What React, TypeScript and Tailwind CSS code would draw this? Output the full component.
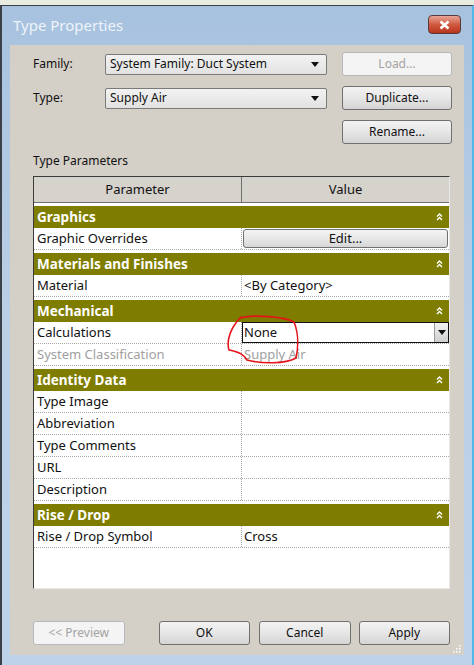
import React from 'react';

const font = { fontFamily: '"Noto Sans", "Open Sans", sans-serif' };

function Btn({ label, disabled, className = '' }: { label: string; disabled?: boolean; className?: string }) {
  return (
    <div
      className={
        'flex items-center justify-center rounded-[3px] border text-[12px] ' +
        (disabled
          ? 'border-[#b5b9bc] bg-[#f4f4f4] text-[#a3a3a3] '
          : 'border-[#707070] bg-gradient-to-b from-[#f3f3f3] via-[#e6e6e6] to-[#d4d4d4] text-[#111] ') +
        className
      }
    >
      {label}
    </div>
  );
}

function Combo({ value }: { value: string }) {
  return (
    <div className="flex h-[21px] w-[222px] items-center justify-between rounded-[2px] border border-[#7a7a7a] bg-gradient-to-b from-[#f2f2f2] to-[#e2e2e2] pl-[4px] pr-[7px] text-[12px] text-[#111]">
      <span>{value}</span>
      <svg width="8" height="5" viewBox="0 0 8 5">
        <path d="M0 0h8L4 5z" fill="#111" />
      </svg>
    </div>
  );
}

function Chevrons() {
  return (
    <svg width="7" height="8" viewBox="0 0 7 8" className="mr-[6px]">
      <path d="M1 3.5L3.5 1L6 3.5M1 7L3.5 4.5L6 7" stroke="#fff" strokeWidth="1.4" fill="none" />
    </svg>
  );
}

function Group({ title }: { title: string }) {
  return (
    <div className="mt-[3px] flex h-[22px] items-center justify-between bg-[#7f7d00] pl-[3px] text-[13.5px] font-bold text-white">
      <span>{title}</span>
      <Chevrons />
    </div>
  );
}

function Row({ name, value, grey, children }: { name: string; value?: string; grey?: boolean; children?: React.ReactNode }) {
  return (
    <div className="flex h-[22px] border-b border-dotted border-[#a8a8a8] bg-white text-[13px]">
      <div className={'flex w-[208px] items-center border-r border-dotted border-[#a8a8a8] pl-[3px] ' + (grey ? 'text-[#a0a0a0]' : 'text-[#111]')}>
        {name}
      </div>
      <div className={'flex flex-1 items-center ' + (grey ? 'text-[#a0a0a0]' : 'text-[#111]')}>
        {children ?? <span className="pl-[2px]">{value}</span>}
      </div>
    </div>
  );
}

export default function App() {
  return (
    <div className="relative h-[665px] w-[474px] overflow-hidden bg-[#e8eddf]" style={font}>
      <div className="mt-[5px] flex h-[660px] flex-col border-l-[2px] border-r-[2px] border-t border-[#3b4049] border-r-[#4fb8e6] bg-gradient-to-b from-[#a7c2df] via-[#bcd0e6] to-[#bcd3ea] px-[8px] pb-[10px]">
        {/* title bar */}
        <div className="flex h-[39px] shrink-0 items-center justify-between">
          <span className="pl-[3px] text-[15px] text-[#eef3f9]">Type Properties</span>
          <div className="mr-[3px] mt-[-2px] flex h-[19px] w-[33px] items-center justify-center rounded-[4px] border border-[#5a3a3a] bg-gradient-to-b from-[#e7a597] via-[#d05a40] to-[#b8341c]">
            <svg width="11" height="10" viewBox="0 0 11 10">
              <path d="M1.5 1.5L9.5 8.5M9.5 1.5L1.5 8.5" stroke="#fff" strokeWidth="2.6" />
            </svg>
          </div>
        </div>

        {/* content panel */}
        <div className="relative flex flex-1 flex-col bg-[#d4d0c8] pl-[23px] pr-[14px] pt-[7px]">
          <div className="grid grid-cols-[57px_222px_110px] grid-rows-[24px_24px_24px] gap-x-[15px] gap-y-[10px] text-[12px] text-[#111]">
            <div className="flex items-center">Family:</div>
            <div className="flex items-center"><Combo value="System Family: Duct System" /></div>
            <Btn label="Load..." disabled />
            <div className="flex items-center">Type:</div>
            <div className="flex items-center"><Combo value="Supply Air" /></div>
            <Btn label="Duplicate..." />
            <div />
            <div />
            <Btn label="Rename..." />
          </div>

          <div className="mt-[8px] text-[12px] text-[#111]">Type Parameters</div>

          {/* table */}
          <div className="mt-[6px] flex h-[413px] w-[417px] flex-col border-b border-l border-r border-t border-[#3c3c3c] border-b-[#e8e8e8] border-r-[#e8e8e8] bg-white">
            <div className="flex h-[26px] shrink-0 border-b border-[#6e6e6e] bg-[#d6d3cc] text-[13px] text-[#111]">
              <div className="flex w-[208px] items-center justify-center border-r border-[#6e6e6e]">Parameter</div>
              <div className="flex flex-1 items-center justify-center">Value</div>
            </div>
            <Group title="Graphics" />
            <Row name="Graphic Overrides">
              <div className="ml-[1px] mr-[1px] flex h-[19px] flex-1 items-center justify-center rounded-[3px] border border-[#707070] bg-gradient-to-b from-[#f4f4f4] via-[#e8e8e8] to-[#d6d6d6] text-[13px]">
                Edit...
              </div>
            </Row>
            <Group title="Materials and Finishes" />
            <Row name="Material" value="<By Category>" />
            <Group title="Mechanical" />
            <Row name="Calculations">
              <div className="flex h-[21px] flex-1 items-center justify-between border border-[#111] bg-white pl-[1px]">
                <span>None</span>
                <div className="flex h-[19px] w-[14px] items-center justify-center border-l border-[#9a9a9a] bg-gradient-to-b from-[#f2f2f2] to-[#cfcfcf]">
                  <svg width="8" height="5" viewBox="0 0 8 5"><path d="M0 0h8L4 5z" fill="#111" /></svg>
                </div>
              </div>
            </Row>
            <Row name="System Classification" value="Supply Air" grey />
            <Group title="Identity Data" />
            <Row name="Type Image" />
            <Row name="Abbreviation" />
            <Row name="Type Comments" />
            <Row name="URL" />
            <Row name="Description" />
            <Group title="Rise / Drop" />
            <Row name="Rise / Drop Symbol" value="Cross" />
            <div className="flex-1 bg-white" />
          </div>

          {/* bottom buttons */}
          <div className="mt-[32px] flex text-[12px]">
            <Btn label="<< Preview" disabled className="h-[24px] w-[92px]" />
            <Btn label="OK" className="ml-[34px] h-[24px] w-[92px]" />
            <Btn label="Cancel" className="ml-[9px] h-[24px] w-[92px]" />
            <Btn label="Apply" className="ml-[8px] h-[24px] w-[92px]" />
          </div>

          {/* resize grip */}
          <svg className="absolute bottom-[2px] right-[3px]" width="9" height="9" viewBox="0 0 9 9">
            <g fill="#fff">
              <rect x="7" y="1" width="1.5" height="1.5" />
              <rect x="4" y="4" width="1.5" height="1.5" />
              <rect x="7" y="4" width="1.5" height="1.5" />
              <rect x="1" y="7" width="1.5" height="1.5" />
              <rect x="4" y="7" width="1.5" height="1.5" />
              <rect x="7" y="7" width="1.5" height="1.5" />
            </g>
          </svg>
        </div>
      </div>

      {/* red hand-drawn annotation */}
      <svg className="pointer-events-none absolute left-0 top-0" width="474" height="665" viewBox="0 0 474 665">
        <path
          d="M240 318 C255 314 284 317 294 322 C299 334 298 349 296 358 C285 364 262 364 247 360 C244 355 240 352 229 350 C226 340 231 327 241 317"
          fill="none"
          stroke="#e3141a"
          strokeWidth="1.6"
          strokeLinecap="round"
        />
      </svg>
    </div>
  );
}
